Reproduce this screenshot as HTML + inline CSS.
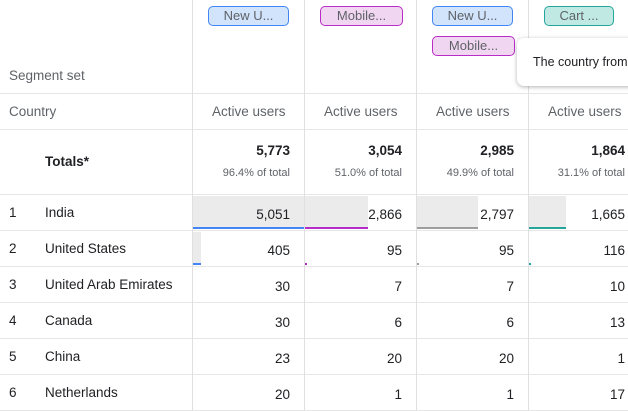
<!DOCTYPE html>
<html><head><style>
*{margin:0;padding:0;box-sizing:border-box}
body{width:628px;height:411px;overflow:hidden;background:#fff;font-family:"Liberation Sans",sans-serif;position:relative;color:#202124}
.a{position:absolute}
.h{background:#e6e6e6;height:1px;left:0;width:628px}
.v{background:#e0e0e0;width:1px;top:0;height:411px}
.t{font-size:13.5px;white-space:nowrap;margin-top:1px}
.g{color:#5f6368}
.r{text-align:right;width:100px}
.chip{position:absolute;height:20px;border-radius:5px;font-size:13px;color:#5f6368;text-align:center;line-height:18px;border:1px solid}
.b{background:#d2e3fc;border-color:#4285f4}
.m{background:#f1d6f1;border-color:#b82dc8}
.c{background:#bfe9e2;border-color:#26a69a}
.bar{position:absolute;background:#ebebeb}
.ln{position:absolute;height:2px}
</style></head><body>
<div class="a h" style="top:93px"></div>
<div class="a h" style="top:129px"></div>
<div class="a h" style="top:194px"></div>
<div class="a h" style="top:230px"></div>
<div class="a h" style="top:266px"></div>
<div class="a h" style="top:302px"></div>
<div class="a h" style="top:338px"></div>
<div class="a h" style="top:374px"></div>
<div class="a h" style="top:410px"></div>
<div class="bar" style="left:193px;top:196px;width:111px;height:33px"></div>
<div class="ln" style="left:193px;top:227px;width:111px;background:#4285f4"></div>
<div class="bar" style="left:305px;top:196px;width:63px;height:33px"></div>
<div class="ln" style="left:305px;top:227px;width:63px;background:#b52dc6"></div>
<div class="bar" style="left:417px;top:196px;width:61px;height:33px"></div>
<div class="ln" style="left:417px;top:227px;width:61px;background:#9e9e9e"></div>
<div class="bar" style="left:529px;top:196px;width:37px;height:33px"></div>
<div class="ln" style="left:529px;top:227px;width:37px;background:#26a69a"></div>
<div class="bar" style="left:193px;top:232px;width:8px;height:33px"></div>
<div class="ln" style="left:193px;top:263px;width:8px;background:#4285f4"></div>
<div class="ln" style="left:305px;top:263px;width:2px;background:#b52dc6"></div>
<div class="ln" style="left:417px;top:263px;width:2px;background:#9e9e9e"></div>
<div class="ln" style="left:529px;top:263px;width:2px;background:#26a69a"></div>
<div class="a v" style="left:192px"></div>
<div class="a v" style="left:304px"></div>
<div class="a v" style="left:416px"></div>
<div class="a v" style="left:528px"></div>
<div class="chip b" style="left:208px;top:6px;width:81px">New U...</div>
<div class="chip m" style="left:320px;top:6px;width:83px">Mobile...</div>
<div class="chip b" style="left:432px;top:6px;width:81px">New U...</div>
<div class="chip m" style="left:432px;top:36px;width:83px">Mobile...</div>
<div class="chip c" style="left:544px;top:6px;width:70px">Cart ...</div>
<div class="a" style="left:517px;top:38px;width:120px;height:48px;background:#fff;border-radius:7px;box-shadow:0 1px 4px rgba(0,0,0,.3)"></div>
<div class="a t" style="left:533px;top:54px;font-size:12.5px">The country from</div>
<div class="a t g" style="left:9px;top:67px">Segment set</div>
<div class="a t g" style="left:9px;top:103px">Country</div>
<div class="a t g" style="left:212px;top:103px">Active users</div>
<div class="a t g" style="left:324px;top:103px">Active users</div>
<div class="a t g" style="left:436px;top:103px">Active users</div>
<div class="a t g" style="left:548px;top:103px">Active users</div>
<div class="a t" style="left:45px;top:153px;font-weight:bold">Totals*</div>
<div class="a t r" style="left:190px;top:142px;font-weight:bold">5,773</div>
<div class="a t r" style="left:302px;top:142px;font-weight:bold">3,054</div>
<div class="a t r" style="left:414px;top:142px;font-weight:bold">2,985</div>
<div class="a t r" style="left:525px;top:142px;font-weight:bold">1,864</div>
<div class="a t r g" style="left:190px;top:166px;font-size:11px">96.4% of total</div>
<div class="a t r g" style="left:302px;top:166px;font-size:11px">51.0% of total</div>
<div class="a t r g" style="left:414px;top:166px;font-size:11px">49.9% of total</div>
<div class="a t r g" style="left:525px;top:166px;font-size:11px">31.1% of total</div>
<div class="a t" style="left:9px;top:204px">1</div><div class="a t" style="left:45px;top:204px">India</div>
<div class="a t" style="left:9px;top:240px">2</div><div class="a t" style="left:45px;top:240px">United States</div>
<div class="a t" style="left:9px;top:276px">3</div><div class="a t" style="left:45px;top:276px">United Arab Emirates</div>
<div class="a t" style="left:9px;top:312px">4</div><div class="a t" style="left:45px;top:312px">Canada</div>
<div class="a t" style="left:9px;top:348px">5</div><div class="a t" style="left:45px;top:348px">China</div>
<div class="a t" style="left:9px;top:384px">6</div><div class="a t" style="left:45px;top:384px">Netherlands</div>
<div class="a t r" style="left:190px;top:206px">5,051</div><div class="a t r" style="left:302px;top:206px">2,866</div><div class="a t r" style="left:414px;top:206px">2,797</div><div class="a t r" style="left:525px;top:206px">1,665</div>
<div class="a t r" style="left:190px;top:242px">405</div><div class="a t r" style="left:302px;top:242px">95</div><div class="a t r" style="left:414px;top:242px">95</div><div class="a t r" style="left:525px;top:242px">116</div>
<div class="a t r" style="left:190px;top:278px">30</div><div class="a t r" style="left:302px;top:278px">7</div><div class="a t r" style="left:414px;top:278px">7</div><div class="a t r" style="left:525px;top:278px">10</div>
<div class="a t r" style="left:190px;top:314px">30</div><div class="a t r" style="left:302px;top:314px">6</div><div class="a t r" style="left:414px;top:314px">6</div><div class="a t r" style="left:525px;top:314px">13</div>
<div class="a t r" style="left:190px;top:350px">23</div><div class="a t r" style="left:302px;top:350px">20</div><div class="a t r" style="left:414px;top:350px">20</div><div class="a t r" style="left:525px;top:350px">1</div>
<div class="a t r" style="left:190px;top:386px">20</div><div class="a t r" style="left:302px;top:386px">1</div><div class="a t r" style="left:414px;top:386px">1</div><div class="a t r" style="left:525px;top:386px">17</div>
</body></html>
